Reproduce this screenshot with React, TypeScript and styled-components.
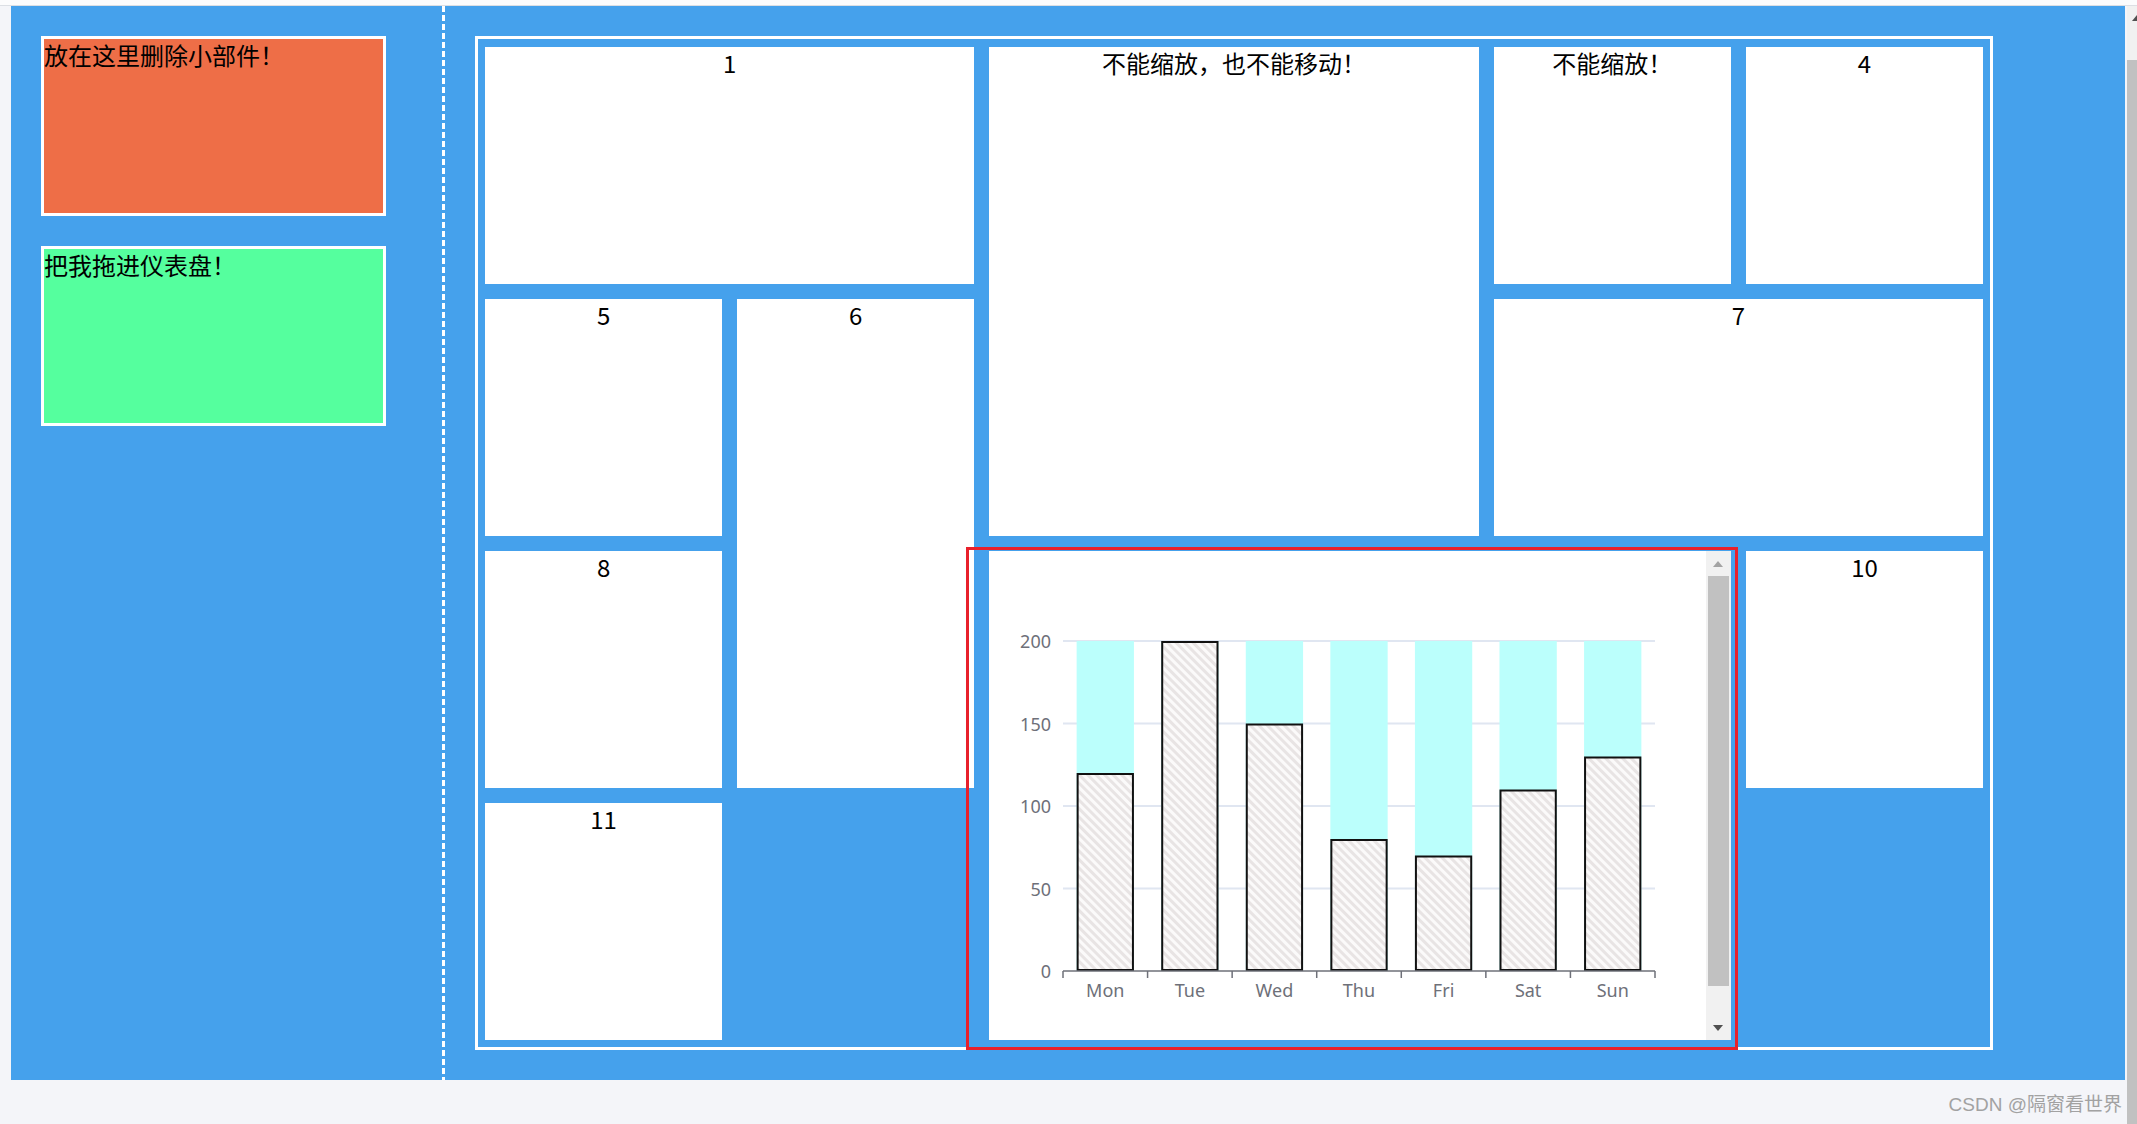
import React from 'react';
import styled, { createGlobalStyle } from 'styled-components';

const GlobalStyle = createGlobalStyle`
  html, body {
    margin: 0;
    padding: 0;
  }
  body {
    background: #f4f5f9;
    font-family: "Noto Sans CJK SC", "Noto Sans", sans-serif;
    overflow: hidden;
  }
`;

const Screen = styled.div`
  display: flex;
  flex-direction: column;
  width: 2137px;
  height: 1124px;
  overflow: hidden;
`;

const TopStrip = styled.div`
  flex: none;
  height: 5px;
  background: #fcfcfd;
  border-bottom: 1px solid #dcdfe4;
`;

const Body = styled.div`
  flex: 1;
  display: flex;
  min-height: 0;
`;

const Viewport = styled.div`
  flex: 1;
  display: flex;
  flex-direction: column;
`;

const Dashboard = styled.div`
  display: flex;
  margin: 0 2px 0 11px;
  background: #45a1ec;
`;

const Sidebar = styled.aside`
  flex: none;
  width: 431px;
  box-sizing: border-box;
  padding: 30px;
  display: flex;
  flex-direction: column;
  gap: 30px;
`;

const PaletteCard = styled.div<{ $fill: string }>`
  width: 345px;
  height: 180px;
  box-sizing: border-box;
  border: 3px solid #fff;
  background: ${p => p.$fill};
  color: #000;
  font-size: 24px;
  line-height: 32px;
`;

const Divider = styled.div`
  flex: none;
  width: 3px;
  background: repeating-linear-gradient(to bottom, #fff 0 6px, transparent 6px 9px);
`;

const Board = styled.main`
  flex: 1;
  padding: 30px;
`;

const Grid = styled.div`
  display: grid;
  width: max-content;
  grid-template-columns: repeat(6, 237.2px);
  grid-auto-rows: 237px;
  gap: 15px;
  padding: 8px 7px 7px;
  border: 3px solid #fff;
`;

const Tile = styled.div<{ $col: string; $row: string }>`
  grid-column: ${p => p.$col};
  grid-row: ${p => p.$row};
  background: #fff;
  color: #000;
  text-align: center;
  font-size: 24px;
  line-height: 32px;
`;

const ChartTile = styled(Tile)`
  position: relative;
  display: flex;
  text-align: left;
`;

const ChartArea = styled.div`
  flex: 1;
  overflow: hidden;

  svg {
    display: block;
  }
`;

const Highlight = styled.div`
  position: absolute;
  top: -4px;
  left: -23px;
  right: -7px;
  bottom: -10px;
  border: 3px solid #e8202b;
  pointer-events: none;
  z-index: 1;
`;

const ScrollTrack = styled.div`
  flex: none;
  width: 25px;
  display: flex;
  flex-direction: column;
  background: #f1f1f1;
`;

const ScrollButton = styled.div`
  flex: none;
  height: 25px;
  display: flex;
  align-items: center;
  justify-content: center;
`;

const Arrow = styled.div<{ $up?: boolean; $color: string }>`
  width: 0;
  height: 0;
  border-left: 5.5px solid transparent;
  border-right: 5.5px solid transparent;
  ${p => (p.$up ? `border-bottom: 6px solid ${p.$color};` : `border-top: 6px solid ${p.$color};`)}
`;

const Thumb = styled.div<{ $h: number }>`
  flex: none;
  height: ${p => p.$h}px;
  margin: 0 2px;
  background: #c1c1c1;
`;

const Spacer = styled.div`
  flex: 1;
`;

const Footer = styled.footer`
  flex: 1;
  display: flex;
  justify-content: flex-end;
  padding: 12px 5px 0 0;
`;

const Watermark = styled.span`
  font-family: "Liberation Sans", "Noto Sans CJK SC", sans-serif;
  font-size: 19px;
  line-height: 26px;
  color: #a2a2a2;
`;

const PageScroll = styled.div`
  flex: none;
  width: 10px;
  display: flex;
  flex-direction: column;
  background: #f1f1f1;
  overflow: hidden;
`;

const PageScrollHead = styled.div`
  flex: none;
  height: 54px;
  padding: 9px 0 0 5px;
  box-sizing: border-box;
`;

const PageThumb = styled.div`
  flex: 1;
  background: #c1c1c1;
`;

const DAYS = ['Mon', 'Tue', 'Wed', 'Thu', 'Fri', 'Sat', 'Sun'];
const VALUES = [120, 200, 150, 80, 70, 110, 130];
const X0 = 74;
const X1 = 666;
const Y0 = 420;
const PX = 1.65;
const CAT = (X1 - X0) / 7;
const BAR = 57.3;
const AXIS = '#6e7079';

const BarChart = () => (
  <svg width="717" height="489">
    <defs>
      <pattern id="hatch" width="6" height="6" patternUnits="userSpaceOnUse" patternTransform="rotate(-45)">
        <rect width="6" height="6" fill="#fbfafa" />
        <rect width="3" height="6" fill="#e8e4e4" />
      </pattern>
    </defs>
    {[50, 100, 150, 200].map(v => (
      <line key={v} x1={X0} x2={X1} y1={Y0 - v * PX} y2={Y0 - v * PX} stroke="#e0e6f1" strokeWidth="1.8" />
    ))}
    {[0, 50, 100, 150, 200].map(v => (
      <text
        key={v}
        x={62}
        y={Y0 - v * PX}
        textAnchor="end"
        dominantBaseline="central"
        fontFamily="'Noto Sans', sans-serif"
        fontSize="18"
        fill={AXIS}
      >
        {v}
      </text>
    ))}
    {VALUES.map((v, i) => {
      const x = X0 + i * CAT + (CAT - BAR) / 2;
      const h = v * PX;
      return (
        <g key={i}>
          <rect x={x} y={Y0 - 200 * PX} width={BAR} height={200 * PX} fill="#bbfffc" />
          <rect x={x + 1} y={Y0 - h + 1} width={BAR - 2} height={h - 2} fill="url(#hatch)" stroke="#111" strokeWidth="2" />
        </g>
      );
    })}
    <line x1={X0} x2={X1} y1={Y0} y2={Y0} stroke={AXIS} strokeWidth="1.5" />
    {Array.from({ length: 8 }, (_, i) => (
      <line key={i} x1={X0 + i * CAT} x2={X0 + i * CAT} y1={Y0} y2={Y0 + 7} stroke={AXIS} strokeWidth="1.5" />
    ))}
    {DAYS.map((d, i) => (
      <text
        key={d}
        x={X0 + i * CAT + CAT / 2}
        y={439}
        textAnchor="middle"
        dominantBaseline="central"
        fontFamily="'Noto Sans', sans-serif"
        fontSize="18"
        fill={AXIS}
      >
        {d}
      </text>
    ))}
  </svg>
);

const App = () => (
  <Screen>
    <GlobalStyle />
    <TopStrip />
    <Body>
      <Viewport>
        <Dashboard>
          <Sidebar>
            <PaletteCard $fill="#ee6e47">放在这里删除小部件！</PaletteCard>
            <PaletteCard $fill="#55ff9e">把我拖进仪表盘！</PaletteCard>
          </Sidebar>
          <Divider />
          <Board>
            <Grid>
              <Tile $col="1 / span 2" $row="1">1</Tile>
              <Tile $col="3 / span 2" $row="1 / span 2">不能缩放，也不能移动！</Tile>
              <Tile $col="5" $row="1">不能缩放！</Tile>
              <Tile $col="6" $row="1">4</Tile>
              <Tile $col="1" $row="2">5</Tile>
              <Tile $col="2" $row="2 / span 2">6</Tile>
              <Tile $col="5 / span 2" $row="2">7</Tile>
              <Tile $col="1" $row="3">8</Tile>
              <ChartTile $col="3 / span 3" $row="3 / span 2">
                <ChartArea>
                  <BarChart />
                </ChartArea>
                <ScrollTrack>
                  <ScrollButton>
                    <Arrow $up $color="#a3a3a3" />
                  </ScrollButton>
                  <Thumb $h={410} />
                  <Spacer />
                  <ScrollButton>
                    <Arrow $color="#505050" />
                  </ScrollButton>
                </ScrollTrack>
                <Highlight />
              </ChartTile>
              <Tile $col="6" $row="3">10</Tile>
              <Tile $col="1" $row="4">11</Tile>
            </Grid>
          </Board>
        </Dashboard>
        <Footer>
          <Watermark>CSDN @隔窗看世界</Watermark>
        </Footer>
      </Viewport>
      <PageScroll>
        <PageScrollHead>
          <Arrow $up $color="#505050" />
        </PageScrollHead>
        <PageThumb />
      </PageScroll>
    </Body>
  </Screen>
);

export default App;
